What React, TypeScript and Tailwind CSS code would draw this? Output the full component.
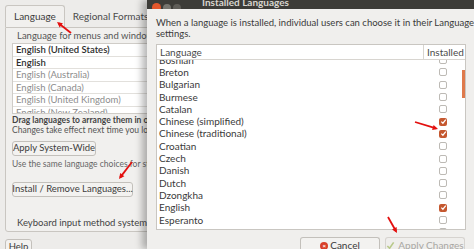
import React from "react";

const font = { fontFamily: 'Lato, "Open Sans", sans-serif' };

const leftRows = [
  { label: "English (United States)", strong: true },
  { label: "English", strong: true },
  { label: "English (Australia)", strong: false },
  { label: "English (Canada)", strong: false },
  { label: "English (United Kingdom)", strong: false },
  { label: "English (New Zealand)", strong: false },
];

const languages = [
  { name: "Bosnian", on: false },
  { name: "Breton", on: false },
  { name: "Bulgarian", on: false },
  { name: "Burmese", on: false },
  { name: "Catalan", on: false },
  { name: "Chinese (simplified)", on: true },
  { name: "Chinese (traditional)", on: true },
  { name: "Croatian", on: false },
  { name: "Czech", on: false },
  { name: "Danish", on: false },
  { name: "Dutch", on: false },
  { name: "Dzongkha", on: false },
  { name: "English", on: true },
  { name: "Esperanto", on: false },
  { name: "Estonian", on: false },
];

function Checkbox({ on }: { on: boolean }) {
  if (on) {
    return (
      <span className="flex size-[8px] items-center justify-center rounded-[2px] bg-[#c5582f]">
        <svg viewBox="0 0 8 8" className="size-[7px]">
          <path d="M1.5 4.2 L3.3 6 L6.6 1.8" fill="none" stroke="#fff" strokeWidth="1.4" />
        </svg>
      </span>
    );
  }
  return <span className="size-[8px] rounded-[2px] border border-[#bdbab5] bg-white" />;
}

function Arrow({ x1, y1, x2, y2 }: { x1: number; y1: number; x2: number; y2: number }) {
  const a = Math.atan2(y2 - y1, x2 - x1);
  const l = 6;
  const p1 = [x2 - l * Math.cos(a - 0.45), y2 - l * Math.sin(a - 0.45)];
  const p2 = [x2 - l * Math.cos(a + 0.45), y2 - l * Math.sin(a + 0.45)];
  return (
    <g>
      <line x1={x1} y1={y1} x2={x2 - 2 * Math.cos(a)} y2={y2 - 2 * Math.sin(a)} stroke="#e3100f" strokeWidth="1.8" />
      <polygon points={`${x2},${y2} ${p1[0]},${p1[1]} ${p2[0]},${p2[1]}`} fill="#e3100f" />
    </g>
  );
}

export default function App() {
  return (
    <div className="relative h-[249px] w-[474px] overflow-hidden whitespace-nowrap bg-[#edecea] text-[#3c3c3c]" style={font}>
      {/* language support window behind */}
      <div className="flex w-[330px] flex-col pl-[5px] pt-[5px]">
        <div className="flex h-[22px] items-stretch text-[10px]">
          <div className="flex items-center rounded-t-[3px] border border-b-0 border-[#c9c6c1] bg-[#f1f0ee] px-[8px]">
            Language
          </div>
          <div className="flex items-center px-[8px] text-[#4a4a4a]">Regional Formats</div>
        </div>
        <div className="flex h-[205px] flex-col rounded-b-[3px] border border-[#c9c6c1] bg-[#f1f0ee] px-[6px] pt-[2px] text-[9.5px]">
          <div className="h-[12px] pl-[5px] leading-[12px] text-[#555]">Language for menus and windows:</div>
          <div className="mt-[1px] h-[71px] overflow-hidden border border-[#cfccc7] bg-white">
            {leftRows.map((r) => (
              <div
                key={r.label}
                className={`h-[12.6px] border-b border-[#e2e0dc] pl-[3px] leading-[12px] ${
                  r.strong ? "font-semibold text-[#2e2e2e]" : "text-[#8d8d8d]"
                }`}
              >
                {r.label}
              </div>
            ))}
          </div>
          <div className="mt-[1px] h-[10px] text-[8.5px] font-bold leading-[10px] text-[#444]">
            Drag languages to arrange them in order of preference.
          </div>
          <div className="h-[10px] text-[8.5px] leading-[10px] text-[#555]">
            Changes take effect next time you log in.
          </div>
          <div className="mt-[6px] flex h-[15px] w-[84px] items-center justify-center rounded-[3px] border border-[#c3c0bb] bg-[#f3f2f0] text-[9.5px] text-[#3c3c3c]">
            Apply System-Wide
          </div>
          <div className="mt-[3px] h-[11px] text-[8.5px] leading-[11px] text-[#666]">
            Use the same language choices for startup and the login screen.
          </div>
          <div className="mt-[12px] flex h-[15px] w-[121px] items-center justify-center rounded-[3px] border border-[#c3c0bb] bg-[#f3f2f0] text-[9.5px] text-[#3c3c3c]">
            Install / Remove Languages...
          </div>
          <div className="mt-[18px] flex h-[16px] items-center gap-[8px] text-[9.5px] text-[#444]">
            <span className="pl-[5px]">Keyboard input method system:</span>
            <span className="h-[16px] w-[60px] rounded-[3px] border border-[#c3c0bb] bg-[#f3f2f0]" />
          </div>
        </div>
        <div className="mt-[7px] flex h-[16px] w-[27px] items-center justify-center rounded-[3px] border border-[#c3c0bb] bg-[#f3f2f0] text-[9.5px]">
          Help
        </div>
      </div>

      {/* Installed Languages dialog */}
      <div className="absolute left-[147px] top-0 flex h-[249px] w-[330px] flex-col bg-[#f0efed] shadow-[-5px_0_7px_rgba(0,0,0,0.28)]">
        <div className="flex h-[9px] shrink-0 items-end gap-[2px] overflow-hidden bg-[#3d3c38] pl-[5px]">
          <span className="mb-[-3px] size-[9px] rounded-full bg-[#e4572c]" />
          <span className="mb-[-3px] size-[8px] rounded-full bg-[#77756f]" />
          <span className="mb-[-3px] size-[8px] rounded-full bg-[#5f5d58]" />
          <span className="mb-[2px] ml-[19px] text-[10px] font-bold leading-[10px] text-[#d8d5cf]">Installed Languages</span>
        </div>
        <div className="pl-[9px] pt-[9px] text-[9.5px] leading-[10.5px] text-[#3a3a3a]">
          When a language is installed, individual users can choose it in their Language
          <br />
          settings.
        </div>
        <div className="ml-[9px] mt-[5px] flex h-[186px] w-[310px] shrink-0 flex-col border border-[#c9c6c1] bg-white text-[10px]">
          <div className="flex h-[15px] shrink-0 border-b border-[#d8d5d0] leading-[14px] text-[#4a4a4a]">
            <span className="flex-1 pl-[3px]">Language</span>
            <span className="w-[42px] border-l border-[#d8d5d0] pl-[3px]">Installed</span>
          </div>
          <div className="relative flex-1 overflow-hidden">
            <div className="mt-[-6px]">
              {languages.map((l) => (
                <div key={l.name} className="flex h-[12.3px] items-center text-[#3a3a3a]">
                  <span className="flex-1 pl-[2px]">{l.name}</span>
                  <span className="flex w-[42px] justify-center pr-[2px]">
                    <Checkbox on={l.on} />
                  </span>
                </div>
              ))}
            </div>
            <div className="absolute right-[0px] top-[10px] h-[28px] w-[3px] bg-[#df7a4c]" />
          </div>
        </div>
        <div className="mt-[7px] flex gap-[5px] pl-[153px] text-[10px]">
          <div className="flex h-[16px] w-[80px] items-center justify-center gap-[2px] rounded-t-[3px] border border-b-0 border-[#c3c0bb] bg-[#f3f2f0] text-[#3a3a3a]">
            <span className="flex size-[8px] items-center justify-center rounded-full bg-[#d8402a] text-[6px] font-bold leading-none text-white">×</span>
            Cancel
          </div>
          <div className="flex h-[16px] w-[80px] items-center justify-center gap-[3px] rounded-t-[3px] border border-b-0 border-[#d6d3cf] bg-[#efeeec] text-[#a9a7a3]">
            <svg viewBox="0 0 10 10" className="size-[9px]">
              <path d="M1.5 5.5 L4 8 L8.5 1.5" fill="none" stroke="#b8c98a" strokeWidth="1.8" />
            </svg>
            Apply Changes
          </div>
        </div>
      </div>

      {/* annotation arrows */}
      <svg className="pointer-events-none absolute left-0 top-0" width="474" height="249">
        <Arrow x1={71} y1={33} x2={57} y2={22} />
        <Arrow x1={132} y1={162} x2={119} y2={179} />
        <Arrow x1={415} y1={122} x2={438} y2={129} />
        <Arrow x1={388} y1={217} x2={397} y2={233} />
      </svg>
    </div>
  );
}
